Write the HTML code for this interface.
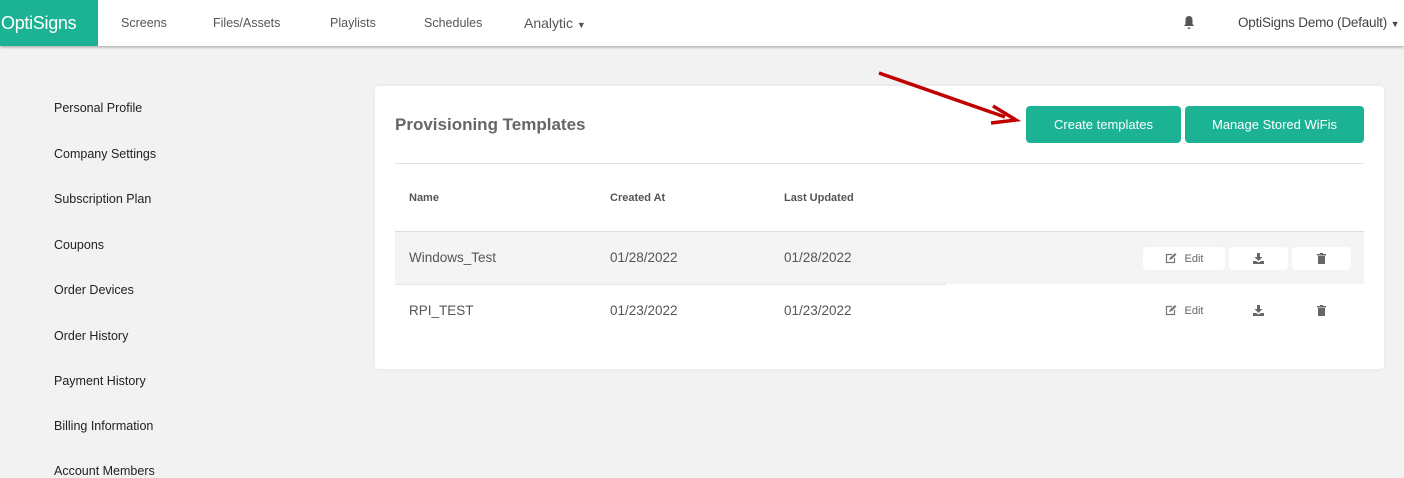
<!DOCTYPE html>
<html><head><style>
*{margin:0;padding:0;box-sizing:border-box}
body{width:1404px;height:475px;overflow:hidden;background:#f2f2f2;font-family:"Liberation Sans",sans-serif;position:relative;color:#333}
.hdr{position:absolute;left:0;top:0;width:1404px;height:46px;background:#fff;box-shadow:0 1px 3px rgba(0,0,0,.35)}
.logo{position:absolute;left:0;top:0;width:98px;height:46px;background:#1cb394;color:#fff;font-size:18px;line-height:46px;padding-left:1px;letter-spacing:-.3px}
.nav{position:absolute;top:16px;font-size:12.5px;color:#555;white-space:nowrap}
.side{position:absolute;left:54px;font-size:12.5px;color:#222}
.card{position:absolute;left:375px;top:86px;width:1009px;height:283px;background:#fff;border-radius:4px;box-shadow:0 0 6px rgba(0,0,0,.06)}
.btn{position:absolute;top:20px;height:37px;background:#1cb394;color:#fff;border-radius:4px;font-size:13px;text-align:center;line-height:37px}
.t{position:absolute;font-size:13.5px;color:#555}
.th{position:absolute;top:106px;font-size:11px;font-weight:bold;color:#555}
.ab{position:absolute;height:23px;background:#fff;border-radius:4px;font-size:11px;color:#666;display:flex;align-items:center;justify-content:center;gap:8px}
</style></head><body>
<div class="hdr">
<div class="logo">OptiSigns</div>
<div class="nav" style="left:121px">Screens</div>
<div class="nav" style="left:213px">Files/Assets</div>
<div class="nav" style="left:330px">Playlists</div>
<div class="nav" style="left:424px">Schedules</div>
<div class="nav" style="left:524px;font-size:14px;top:15px">Analytic <span style="font-size:9px">▼</span></div>
<svg style="position:absolute;left:1182px;top:15px" width="14" height="15" viewBox="0 0 14 15"><path d="M7 1C4.5 1 3.5 3 3.5 5v4L2 11h10l-1.5-2V5C10.5 3 9.5 1 7 1z M5.5 12.5a1.5 1.5 0 0 0 3 0z" fill="#555"/></svg>
<div class="nav" style="left:1238px;font-size:13.5px;top:15px;color:#444;letter-spacing:-.2px">OptiSigns Demo (Default) <span style="font-size:9px">▼</span></div>
</div>
<div class="side" style="top:101px">Personal Profile</div>
<div class="side" style="top:147px">Company Settings</div>
<div class="side" style="top:192px">Subscription Plan</div>
<div class="side" style="top:238px">Coupons</div>
<div class="side" style="top:283px">Order Devices</div>
<div class="side" style="top:329px">Order History</div>
<div class="side" style="top:374px">Payment History</div>
<div class="side" style="top:419px">Billing Information</div>
<div class="side" style="top:464px">Account Members</div>
<div class="card">
<div style="position:absolute;left:20px;top:29px;font-size:17px;font-weight:bold;color:#666">Provisioning Templates</div>
<div class="btn" style="left:651px;width:155px">Create templates</div>
<div class="btn" style="left:810px;width:179px">Manage Stored WiFis</div>
<div style="position:absolute;left:20px;top:77px;width:969px;height:1px;background:#e2e2e2"></div>
<div class="th" style="left:34px">Name</div>
<div class="th" style="left:235px">Created At</div>
<div class="th" style="left:409px">Last Updated</div>
<div style="position:absolute;left:20px;top:145px;width:969px;height:1px;background:#ddd"></div>
<div style="position:absolute;left:20px;top:146px;width:969px;height:52px;background:#f4f4f4"></div>
<div style="position:absolute;left:20px;top:198px;width:551px;height:1px;background:#e6e6e6"></div>
<div class="t" style="left:34px;top:164px">Windows_Test</div>
<div class="t" style="left:235px;top:164px">01/28/2022</div>
<div class="t" style="left:409px;top:164px">01/28/2022</div>
<div class="t" style="left:34px;top:217px">RPI_TEST</div>
<div class="t" style="left:235px;top:217px">01/23/2022</div>
<div class="t" style="left:409px;top:217px">01/23/2022</div>

<div class="ab" style="left:768px;top:161px;width:82px"><svg width="12" height="11" viewBox="0 0 12 11"><path d="M7 1.5H1.5v8h8V5" fill="none" stroke="#777" stroke-width="1.2"/><path d="M4 7l1-2.5L10 0l1.5 1.5L7 6z" fill="#777"/></svg><span>Edit</span></div>
<div class="ab" style="left:854px;top:161px;width:59px"><svg width="11" height="11" viewBox="0 0 11 11"><path d="M4 0h3v4h2.5L5.5 8 1.5 4H4z M0 8h3l2.5 1.5L8 8h3v3H0z" fill="#666"/></svg></div>
<div class="ab" style="left:917px;top:161px;width:59px"><svg width="9" height="11" viewBox="0 0 9 11"><path d="M3 0h3v1h3v1.5H0V1h3z M1 3h7v8H1z" fill="#666"/></svg></div>
<div class="ab" style="left:768px;top:213px;width:82px;background:none"><svg width="12" height="11" viewBox="0 0 12 11"><path d="M7 1.5H1.5v8h8V5" fill="none" stroke="#777" stroke-width="1.2"/><path d="M4 7l1-2.5L10 0l1.5 1.5L7 6z" fill="#777"/></svg><span>Edit</span></div>
<div class="ab" style="left:854px;top:213px;width:59px;background:none"><svg width="11" height="11" viewBox="0 0 11 11"><path d="M4 0h3v4h2.5L5.5 8 1.5 4H4z M0 8h3l2.5 1.5L8 8h3v3H0z" fill="#666"/></svg></div>
<div class="ab" style="left:917px;top:213px;width:59px;background:none"><svg width="9" height="11" viewBox="0 0 9 11"><path d="M3 0h3v1h3v1.5H0V1h3z M1 3h7v8H1z" fill="#666"/></svg></div>
</div>
<svg style="position:absolute;left:0;top:0" width="1404" height="475"><line x1="879" y1="73" x2="1005" y2="117" stroke="#c00000" stroke-width="3.5"/><path d="M993 106 L1016 120 L991 123" fill="none" stroke="#c00000" stroke-width="3.5"/></svg>
</body></html>
